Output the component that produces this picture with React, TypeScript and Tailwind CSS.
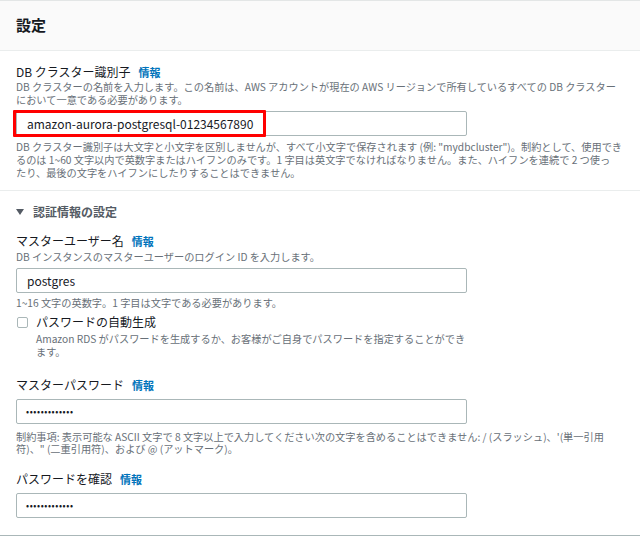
import React from 'react';

const font = { fontFamily: '"Noto Sans CJK JP", "Noto Sans", sans-serif' };

const Info: React.FC = () => (
  <span className="ml-[8px] text-[11px] font-bold text-[#0073bb] leading-[14px]">情報</span>
);

const Label: React.FC<{ text: string; className?: string }> = ({ text, className = '' }) => (
  <div className={`flex items-baseline text-[12px] leading-[14px] text-[#16191f] whitespace-nowrap ${className}`}>
    <span>{text}</span>
    <Info />
  </div>
);

const Input: React.FC<{ value: string; className?: string }> = ({ value, className = '' }) => (
  <div className={`w-[451px] h-[25px] border border-[#aab7b8] rounded-[2px] bg-white flex items-center pl-[10px] text-[12px] text-[#16191f] ${className}`}>
    {value}
  </div>
);

const Dots: React.FC = () => (
  <span className="text-[9px] tracking-[0.6px] text-[#16191f]">•••••••••••••</span>
);

export default function App() {
  return (
    <div style={font} className="w-[640px] h-[536px] bg-white overflow-hidden">
      <div className="h-[51px] border-t border-b border-t-[#e3e6e6] border-b-[#eaeded] bg-[#fafafa] flex items-center px-4">
        <h2 className="text-[15px] font-bold text-[#16191f]">設定</h2>
      </div>

      <div className="px-4 pt-[14px] pb-[11px] border-b border-[#eaeded]">
        <Label text="DB クラスター識別子" />
        <div className="mt-px text-[10.2px] leading-[13px] text-[#687078] whitespace-nowrap">
          DB クラスターの名前を入力します。この名前は、AWS アカウントが現在の AWS リージョンで所有しているすべての DB クラスター
          <br />
          において一意である必要があります。
        </div>
        <div className="relative mt-[5px] w-[451px]">
          <Input value="amazon-aurora-postgresql-01234567890" />
          <div className="absolute left-[-3px] top-[-1px] w-[253px] h-[27px] border-[3px] border-[#ff0000] rounded-[1px]" />
        </div>
        <div className="mt-1 text-[10.2px] leading-[13px] text-[#687078] whitespace-nowrap">
          DB クラスター識別子は大文字と小文字を区別しませんが、すべて小文字で保存されます (例: "mydbcluster")。制約として、使用でき
          <br />
          るのは 1~60 文字以内で英数字またはハイフンのみです。1 字目は英文字でなければなりません。また、ハイフンを連続で 2 つ使っ
          <br />
          たり、最後の文字をハイフンにしたりすることはできません。
        </div>
      </div>

      <div className="px-4 pt-[13px] pb-[17px] border-b border-[#aab7b8]">
        <div className="flex items-center h-4 text-[12px] font-bold text-[#545b64]">
          <svg width="8" height="6" viewBox="0 0 8 6" className="mr-[9px]">
            <path d="M0 0 L8 0 L4 6 Z" fill="#545b64" />
          </svg>
          認証情報の設定
        </div>

        <Label text="マスターユーザー名" className="mt-[14px]" />
        <div className="mt-[2px] text-[10.2px] leading-[13px] text-[#687078] whitespace-nowrap">
          DB インスタンスのマスターユーザーのログイン ID を入力します。
        </div>
        <Input value="postgres" className="mt-[5px]" />
        <div className="mt-[3px] text-[10.2px] leading-[13px] text-[#687078] whitespace-nowrap">
          1~16 文字の英数字。1 字目は文字である必要があります。
        </div>

        <div className="mt-[5px] flex items-start">
          <div className="mt-[3px] ml-px w-[11px] h-[11px] border border-[#aab7b8] rounded-[2px] bg-white shrink-0" />
          <div className="ml-[8px]">
            <div className="text-[12px] leading-4 text-[#16191f]">パスワードの自動生成</div>
            <div className="mt-[2px] text-[10.2px] leading-[13px] text-[#687078] whitespace-nowrap">
              Amazon RDS がパスワードを生成するか、お客様がご自身でパスワードを指定することができ
              <br />
              ます。
            </div>
          </div>
        </div>

        <Label text="マスターパスワード" className="mt-[20px]" />
        <Input value="" className="mt-[7px]" />
        <div className="-mt-[25px] h-[25px] pl-[10px] flex items-center">
          <Dots />
        </div>
        <div className="mt-[7px] text-[10.2px] leading-[12px] text-[#687078] whitespace-nowrap">
          制約事項: 表示可能な ASCII 文字で 8 文字以上で入力してください次の文字を含めることはできません: / (スラッシュ)、'(単一引用
          <br />
          符)、" (二重引用符)、および @ (アットマーク)。
        </div>

        <Label text="パスワードを確認" className="mt-[17px]" />
        <Input value="" className="mt-[7px]" />
        <div className="-mt-[25px] h-[25px] pl-[10px] flex items-center">
          <Dots />
        </div>
      </div>
    </div>
  );
}
